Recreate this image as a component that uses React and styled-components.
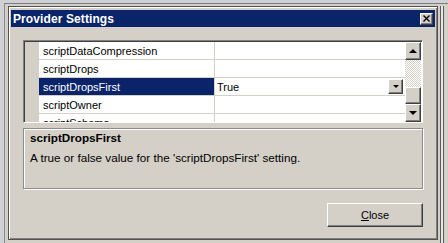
import React from "react";
import styled, { createGlobalStyle, css } from "styled-components";

const GlobalStyle = createGlobalStyle`
  html, body {
    margin: 0;
    padding: 0;
  }
  body {
    background: #d4d0c8;
    font-family: "Liberation Sans", Arial, sans-serif;
    font-size: 11px;
    color: #000;
  }
`;

const raised = css`
  box-sizing: border-box;
  background: #d4d0c8;
  border: 1px solid;
  border-color: #ffffff #404040 #404040 #ffffff;
  box-shadow: inset -1px -1px 0 #808080;
`;

const ROWS = [
  { name: "scriptDataCompression", value: "" },
  { name: "scriptDrops", value: "" },
  { name: "scriptDropsFirst", value: "True", selected: true },
  { name: "scriptOwner", value: "" },
  { name: "scriptSchema", value: "" },
];

export default function App() {
  return (
    <>
      <GlobalStyle />
      <Page>
        <Backdrop>
          <Dialog>
            <TitleBar>
              <Title>Provider Settings</Title>
              <CloseBox>
                <svg width="7" height="7" viewBox="0 0 7 7">
                  <path d="M0.5 0.5 L6.5 6.5 M6.5 0.5 L0.5 6.5" stroke="#000" strokeWidth="1.4" />
                </svg>
              </CloseBox>
            </TitleBar>
            <Body>
              <Panel>
                <Grid>
                  {ROWS.map((row) => (
                    <Row key={row.name}>
                      <Gutter />
                      <NameCell $selected={row.selected}>{row.name}</NameCell>
                      <ValueCell>
                        <span>{row.value}</span>
                        {row.selected && (
                          <DropButton>
                            <Arrow $down $small />
                          </DropButton>
                        )}
                      </ValueCell>
                    </Row>
                  ))}
                </Grid>
                <ScrollBar>
                  <ScrollButton>
                    <Arrow />
                  </ScrollButton>
                  <Track $grow={28} />
                  <Thumb />
                  <ScrollButton>
                    <Arrow $down />
                  </ScrollButton>
                </ScrollBar>
              </Panel>
              <HelpBox>
                <HelpTitle>scriptDropsFirst</HelpTitle>
                <HelpText>A true or false value for the 'scriptDropsFirst' setting.</HelpText>
              </HelpBox>
              <Footer>
                <Button>
                  <u>C</u>lose
                </Button>
              </Footer>
            </Body>
          </Dialog>
          <RightRail />
        </Backdrop>
      </Page>
    </>
  );
}

const Page = styled.div`
  width: 448px;
  height: 243px;
  box-sizing: border-box;
  background: #cfd1d6;
  display: flex;
  padding: 3px 0 0 4px;
  overflow: hidden;
`;

const Backdrop = styled.div`
  flex: 1;
  display: flex;
  align-items: flex-start;
  background: #d4d0c8;
  border-top: 1px solid #7c7c7c;
  border-left: 1px solid #8a8a8a;
  padding: 2px 0 0 3px;
`;

const RightRail = styled.div`
  align-self: stretch;
  width: 2px;
  margin-left: 2px;
  border-left: 1px solid #5a5a5a;
  border-right: 1px solid #5a5a5a;
  background: #e8e8e8;
`;

const Dialog = styled.div`
  box-sizing: border-box;
  width: 430px;
  height: 234px;
  background: #d4d0c8;
  border: 1px solid #505050;
  box-shadow: inset 1px 1px 0 #ffffff, inset -1px -1px 0 #808080;
  padding: 3px 2px 2px 2px;
  display: flex;
  flex-direction: column;
`;

const TitleBar = styled.div`
  height: 17px;
  background: #0a246a;
  display: flex;
  align-items: center;
  justify-content: space-between;
  padding: 0 2px 0 2px;
`;

const Title = styled.span`
  color: #ffffff;
  font-weight: bold;
  font-size: 12px;
  letter-spacing: 0.1px;
`;

const CloseBox = styled.div`
  ${raised};
  width: 13px;
  height: 12px;
  display: flex;
  align-items: center;
  justify-content: center;
`;

const Body = styled.div`
  display: flex;
  flex-direction: column;
  padding: 13px 12px 0 12px;
`;

const Panel = styled.div`
  box-sizing: border-box;
  height: 83px;
  display: flex;
  border: 1px solid;
  border-color: #808080 #ffffff #ffffff #808080;
  box-shadow: inset 1px 1px 0 #404040;
  padding: 1px 1px 0 1px;
  overflow: hidden;
  background: #ffffff;
`;

const Grid = styled.div`
  flex: 1;
  overflow: hidden;
`;

const Row = styled.div`
  display: grid;
  grid-template-columns: 14px 176px 1fr;
  height: 18px;
`;

const Gutter = styled.div`
  background: #d4d0c8;
`;

const NameCell = styled.div`
  box-sizing: border-box;
  display: flex;
  align-items: center;
  padding-left: 4px;
  border-bottom: 1px solid #d4d0c8;
  border-right: 1px solid #d4d0c8;
  background: ${(p) => (p.$selected ? "#0a246a" : "#ffffff")};
  color: ${(p) => (p.$selected ? "#ffffff" : "#000000")};
  white-space: nowrap;
`;

const ValueCell = styled.div`
  box-sizing: border-box;
  display: flex;
  align-items: center;
  justify-content: space-between;
  padding: 0 2px 0 2px;
  border-bottom: 1px solid #d4d0c8;
`;

const DropButton = styled.div`
  ${raised};
  width: 15px;
  height: 15px;
  display: flex;
  align-items: center;
  justify-content: center;
`;

const Arrow = styled.span`
  width: 0;
  height: 0;
  border-left: ${(p) => (p.$small ? 3 : 4)}px solid transparent;
  border-right: ${(p) => (p.$small ? 3 : 4)}px solid transparent;
  ${(p) =>
    p.$down
      ? `border-top: ${p.$small ? 3 : 4}px solid #000;`
      : `border-bottom: 4px solid #000;`}
`;

const ScrollBar = styled.div`
  width: 16px;
  display: flex;
  flex-direction: column;
`;

const ScrollButton = styled.div`
  ${raised};
  height: 18px;
  display: flex;
  align-items: center;
  justify-content: center;
`;

const Track = styled.div`
  height: ${(p) => p.$grow}px;
  background-color: #ffffff;
  background-image: linear-gradient(45deg, #d4d0c8 25%, transparent 25%, transparent 75%, #d4d0c8 75%),
    linear-gradient(45deg, #d4d0c8 25%, transparent 25%, transparent 75%, #d4d0c8 75%);
  background-size: 2px 2px;
  background-position: 0 0, 1px 1px;
`;

const Thumb = styled.div`
  ${raised};
  height: 17px;
`;

const HelpBox = styled.div`
  box-sizing: border-box;
  height: 61px;
  margin-top: 5px;
  border: 1px solid #8c8c8c;
  box-shadow: 1px 1px 0 #ffffff, inset 1px 1px 0 #ffffff;
  padding: 2px 6px;
  font-size: 11.7px;
  line-height: 14px;
`;

const HelpTitle = styled.div`
  font-weight: bold;
`;

const HelpText = styled.div`
  margin-top: 6px;
`;

const Footer = styled.div`
  display: flex;
  justify-content: flex-end;
  margin-top: 14px;
`;

const Button = styled.div`
  ${raised};
  width: 96px;
  height: 24px;
  display: flex;
  align-items: center;
  justify-content: center;
  font-size: 11px;
`;
